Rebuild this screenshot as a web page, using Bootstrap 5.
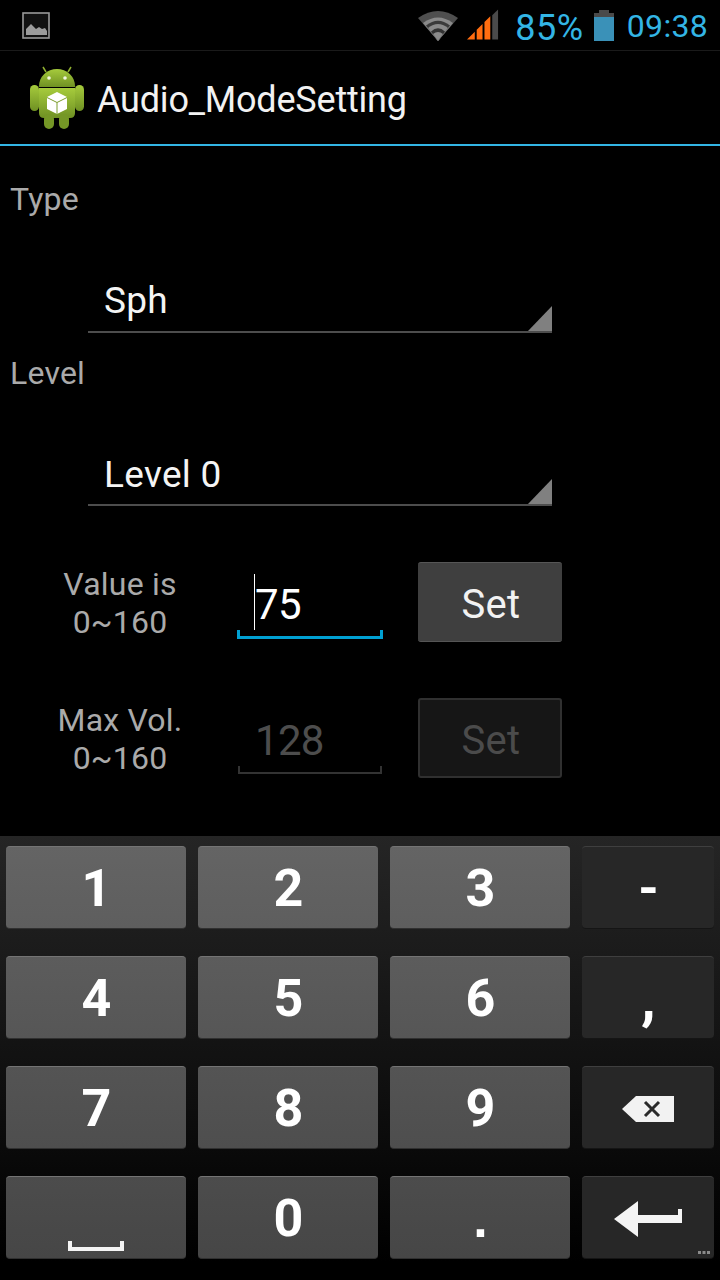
<!DOCTYPE html>
<html lang="en"><head><meta charset="utf-8">
<link href="https://cdn.jsdelivr.net/npm/bootstrap@5.3.0/dist/css/bootstrap.min.css" rel="stylesheet">
<style>
html,body{background:#000;height:1280px;overflow:hidden}
body{font-family:Roboto,"Liberation Sans",sans-serif;color:#fff}
.phone{width:720px;height:1280px}
.sbar{height:51px;border-bottom:1px solid #1a1a1a;color:#33b5e5;padding:0 12px 0 22px}
.sbar .pct{font-size:36px;line-height:50px;margin-left:15px;letter-spacing:.6px;padding-top:6px}
.sbar .clk{font-size:32px;line-height:50px;margin-left:13px;letter-spacing:.3px;padding-top:2px}
.sigic{margin-left:9px}
.batic{margin-left:10px}
.abar{height:95px;border-bottom:2px solid #33b5e5;padding:4px 0 0 29px}
.abar .ttl{font-size:36px;margin-left:12px;color:#f2f2f2;line-height:1;letter-spacing:-.2px}
.droid{margin-bottom:4px}
.lbl{font-size:32px;line-height:38px;color:#aaa;padding-left:10px;letter-spacing:.2px}
.sec1{padding-top:34px}.sec2{padding-top:21px}
.spin{margin-left:88px;width:464px;height:115px;border-bottom:2px solid #4d4d4d;padding:0 0 9px 16px;font-size:37px;line-height:42px;color:#f4f4f4;letter-spacing:.3px}
.spin::after{content:"";position:absolute;right:0;bottom:0;width:24px;height:25px;background:#808080;clip-path:polygon(100% 0,100% 100%,0 100%)}
.sec2 .spin{height:114px;padding-bottom:8px}
.frow{height:80px}
.fr1{margin-top:56px}.fr2{margin-top:56px}
.flab{width:240px;font-size:32px;line-height:38px;color:#aaa;padding-top:3px;letter-spacing:.2px}
.fld{width:144px;height:80px;margin-left:-2px;font-size:42px;line-height:85px;padding-left:17px;letter-spacing:-.7px}
.fld::after{content:"";position:absolute;left:-1px;right:-1px;bottom:3px;height:9px;border:solid #00a0d2;border-width:0 3px 3px}
.fld.off{color:#4d4d4d}
.fld.off::after{left:0;right:0;bottom:4px;height:8px;border-color:#333;border-width:0 2px 2px}
.caret-bar{position:absolute;left:16px;top:12px;width:1px;height:56px;background:#fff}
.setbtn{width:144px;height:80px;margin-left:36px;font-size:40px;line-height:84px;padding:0 0 0 2px;border-radius:3px;background:#3f3f3f;border:0;border-top:1px solid #565656;border-bottom:1px solid #555;color:#f2f2f2;letter-spacing:.3px;--bs-btn-hover-bg:#3f3f3f;--bs-btn-hover-color:#f2f2f2}
.setbtn.off,.setbtn.off:disabled{background:#161616;border:2px solid #303030;color:#4b4b4b;opacity:1;line-height:82px}
.kbd{margin-top:58px;height:444px;background:linear-gradient(#252525,#000 96%);padding:10px 6px 0;display:grid;grid-template-columns:180px 180px 180px 132px;grid-auto-rows:83px;column-gap:12px;row-gap:27px}
.kkey{border-radius:4px;background:linear-gradient(#646464,#464646) fixed;background-size:100% 413px;background-position:0 846px;border-top:1px solid #747474;border-bottom:1px solid #303030;font-size:52px;font-weight:700;line-height:1;padding:3px 0 0 1px}
.kkey.fn{background:#272727;border-top-color:#3f3f3f;border-bottom-color:#151515}
.kkey svg{display:block;margin-left:-2px}
.kkey svg.dots{margin-left:0}
.sq{font-family:"Liberation Sans",sans-serif}
.kkey.cm{font-size:60px;padding-top:0}
</style></head>
<body>
<div class="phone d-flex flex-column">
  <div class="sbar d-flex align-items-center">
    <svg width="28" height="27" viewBox="0 0 28 27"><rect x="1" y="1" width="26" height="25" fill="#111" stroke="#9a9a9a" stroke-width="1.6"/><path d="M4 23V17L9 12 14 17 17 15 20 17 23 16 25 19V23Z" fill="#9c9c9c"/></svg>
    <div class="ms-auto d-flex align-items-center">
      <svg width="40" height="31" viewBox="0 0 40 31"><path d="M0 8Q20-6 40 8L20 31Z" fill="#4f4f4f"/><path d="M5 13Q20 2 35 13L20 31Z" fill="#8a8a8a"/><path d="M8 15.500Q20 6 32 15.500L20 31Z" fill="#3a3a3a"/><path d="M10 18Q20 10 30 18L20 31Z" fill="#8a8a8a"/><path d="M13 21.500Q20 15 27 21.500L20 31Z" fill="#333"/><path d="M15 24Q20 20 25 24L20 31Z" fill="#8a8a8a"/></svg>
      <svg class="sigic" width="33" height="32" viewBox="0 0 34 32"><path d="M0 31 8 23V31ZM10 31V21L16 15V31ZM18 31V13L24 7V31Z" fill="#ff6d10"/><path d="M26 31V6L32 0V31Z" fill="#4a4a4a" /></svg>
      <span class="pct">85%</span>
      <svg class="batic" width="20" height="31" viewBox="0 0 20 31"><path d="M5 0H15V3H20V7H0V3H5Z" fill="#4a4a4a"/><rect y="7" width="20" height="24" fill="#3a91b8"/></svg>
      <span class="clk">09:38</span>
    </div>
  </div>
  <div class="abar d-flex align-items-center">
    <svg class="droid" width="56" height="64" viewBox="0 0 56 64">
      <defs><linearGradient id="ag" x1="0" y1="0" x2="0" y2="1"><stop offset="0" stop-color="#a6cb3c"/><stop offset="1" stop-color="#6f9123"/></linearGradient></defs>
      <path d="M17 6 14 1M39 6 42 1" stroke="#90b030" stroke-width="1.500"/>
      <path d="M10 20A18 17 0 0 1 46 20V21H10Z" fill="url(#ag)"/>
      <circle cx="20" cy="12" r="1.800" fill="#f1f6df"/><circle cx="36" cy="12" r="1.800" fill="#f1f6df"/>
      <rect x="1" y="19" width="9" height="26" rx="4.500" fill="url(#ag)"/><rect x="46" y="19" width="9" height="26" rx="4.500" fill="url(#ag)"/>
      <path d="M10 22H46V47Q46 52 41 52H15Q10 52 10 47Z" fill="url(#ag)"/>
      <rect x="15" y="48" width="10" height="15" rx="5" fill="#759726"/><rect x="30" y="48" width="10" height="15" rx="5" fill="#759726"/>
      <path d="M28 26 18 31V43L28 48 38 43V31Z" fill="#fff"/><path d="M18 31.500 28 36.500V48M38 31.500 28 36.500" fill="none" stroke="#7d9d2c" stroke-width="1"/>
    </svg>
    <div class="ttl">Audio_ModeSetting</div>
  </div>
  <div class="sec1">
    <div class="lbl">Type</div>
    <div class="spin position-relative d-flex align-items-end">Sph</div>
  </div>
  <div class="sec2">
    <div class="lbl">Level</div>
    <div class="spin position-relative d-flex align-items-end">Level 0</div>
  </div>
  <div class="frow fr1 d-flex">
    <div class="flab text-center">Value is<br>0~160</div>
    <div class="fld position-relative">75<span class="caret-bar"></span></div>
    <button class="btn setbtn" type="button">Set</button>
  </div>
  <div class="frow fr2 d-flex">
    <div class="flab text-center">Max Vol.<br>0~160</div>
    <div class="fld off position-relative">128</div>
    <button class="btn setbtn off" type="button" disabled>Set</button>
  </div>
  <div class="kbd">
    <div class="kkey d-flex align-items-center justify-content-center">1</div>
    <div class="kkey d-flex align-items-center justify-content-center">2</div>
    <div class="kkey d-flex align-items-center justify-content-center">3</div>
    <div class="kkey fn d-flex align-items-center justify-content-center">-</div>
    <div class="kkey d-flex align-items-center justify-content-center">4</div>
    <div class="kkey d-flex align-items-center justify-content-center">5</div>
    <div class="kkey d-flex align-items-center justify-content-center">6</div>
    <div class="kkey fn cm d-flex align-items-center justify-content-center">,</div>
    <div class="kkey d-flex align-items-center justify-content-center">7</div>
    <div class="kkey d-flex align-items-center justify-content-center">8</div>
    <div class="kkey d-flex align-items-center justify-content-center">9</div>
    <div class="kkey fn d-flex align-items-center justify-content-center">
      <svg width="52" height="26" viewBox="0 0 52 26"><path d="M0 13 14 0H52V26H14Z" fill="#f2f2f2"/><path d="M23 6 37 20M37 6 23 20" stroke="#2a2a2a" stroke-width="3"/></svg>
    </div>
    <div class="kkey d-flex align-items-end justify-content-center">
      <svg width="56" height="10" viewBox="0 0 56 10" style="margin-bottom:7px"><path d="M0 0H4V6H52V0H56V10H0Z" fill="#f4f4f4"/></svg>
    </div>
    <div class="kkey d-flex align-items-center justify-content-center">0</div>
    <div class="kkey sq d-flex align-items-center justify-content-center">.</div>
    <div class="kkey fn d-flex align-items-center justify-content-center position-relative">
      <svg width="68" height="36" viewBox="0 0 68 36"><path d="M0 18 24 0V14H64V8H68V22H24V36Z" fill="#f4f4f4"/></svg>
      <svg class="dots position-absolute" style="right:4px;bottom:4px" width="12" height="3" viewBox="0 0 12 3"><path d="M0 0H3V3H0ZM4.500 0H7.500V3H4.500ZM9 0H12V3H9Z" fill="#8a8a8a"/></svg>
    </div>
  </div>
</div>
<script src="https://cdn.jsdelivr.net/npm/bootstrap@5.3.0/dist/js/bootstrap.bundle.min.js"></script>
</body></html>
